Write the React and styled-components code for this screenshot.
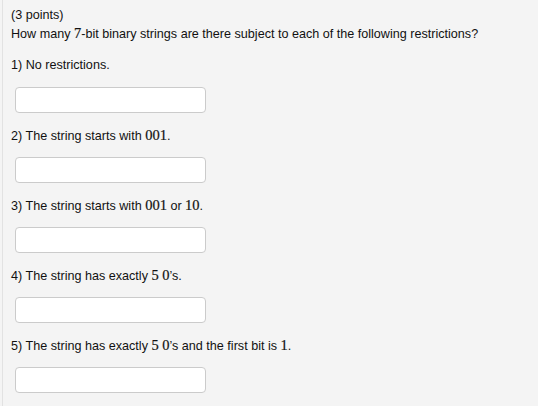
import { createGlobalStyle, styled } from 'styled-components';

const GlobalStyle = createGlobalStyle`
  html, body {
    margin: 0;
    padding: 0;
    background: #f4f4f4;
  }
`;

const Page = styled.div`
  min-height: 406px;
  width: 538px;
  box-sizing: border-box;
  border-left: 1px solid #e2e2e2;
  margin-left: 2px;
  padding: 6px 0 0 8px;
  font-family: 'Liberation Sans', Arial, sans-serif;
  font-size: 12.6px;
  color: #111;
`;

const Line = styled.div`
  line-height: 18px;
  height: 18px;
  white-space: nowrap;
`;

const Header = styled.div`
  margin-bottom: 14px;
`;

const Part = styled.div`
  display: flex;
  flex-direction: column;
  gap: 13px;
  padding-bottom: 13px;
`;

const Answer = styled.input`
  box-sizing: border-box;
  width: 191px;
  height: 26px;
  margin-left: 4px;
  background: #fff;
  border: 1px solid #cbcbcb;
  border-radius: 4px;
  outline: none;
`;

const M = styled.span`
  font-family: 'Liberation Serif', 'Times New Roman', serif;
  font-size: 14.5px;
  font-weight: 500;
  -webkit-text-stroke: 0.2px #111;
`;

const parts = [
  <>1) No restrictions.</>,
  <>2) The string starts with <M>001</M>.</>,
  <>3) The string starts with <M>001</M> or <M>10</M>.</>,
  <>4) The string has exactly <M>5</M> <M>0</M>’s.</>,
  <>5) The string has exactly <M>5</M> <M>0</M>’s and the first bit is <M>1</M>.</>,
];

export default function App() {
  return (
    <>
      <GlobalStyle />
      <Page>
        <Header>
          <Line>(3 points)</Line>
          <Line>
            How many <M>7</M>-bit binary strings are there subject to each of the following restrictions?
          </Line>
        </Header>
        {parts.map((p, i) => (
          <Part key={i}>
            <Line>{p}</Line>
            <Answer type="text" />
          </Part>
        ))}
      </Page>
    </>
  );
}
